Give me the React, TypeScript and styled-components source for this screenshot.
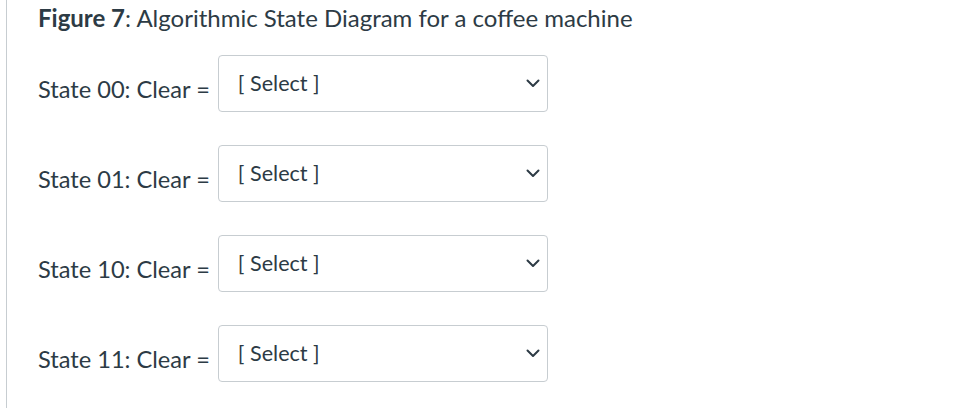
import React from "react";
import styled, { createGlobalStyle } from "styled-components";

const Global = createGlobalStyle`
  html, body { margin: 0; padding: 0; background: #fff; }
  body { font-family: Lato, "Open Sans", sans-serif; color: #2d3b45; }
`;

const Page = styled.div`
  width: 970px;
  height: 408px;
  box-sizing: border-box;
  padding-left: 6px;
`;

const Panel = styled.div`
  height: 408px;
  box-sizing: border-box;
  border-left: 1px solid #c7cdd1;
  padding: 3px 0 0 31px;
`;

const Title = styled.div`
  font-size: 24px;
  line-height: 30px;
  margin: 0 0 22px;
`;

const Rows = styled.div`
  display: flex;
  flex-direction: column;
  gap: 33px;
`;

const Row = styled.div`
  display: flex;
  align-items: center;
`;

const Label = styled.span`
  font-size: 23.6px;
  margin-right: 8px;
  position: relative;
  top: 5px;
`;

const SelectBox = styled.div`
  width: 330px;
  height: 57px;
  box-sizing: border-box;
  border: 1px solid #c7cdd1;
  border-radius: 4px;
  display: flex;
  align-items: center;
  justify-content: space-between;
  padding: 0 7px 1px 19px;
  font-size: 21.6px;
`;

const Chevron = () => (
  <svg width="14" height="9" viewBox="0 0 14 9">
    <path d="M1.5 1.5 L7 7 L12.5 1.5" fill="none" stroke="#2d3b45" strokeWidth="2" strokeLinecap="round" strokeLinejoin="round" />
  </svg>
);

const states = ["00", "01", "10", "11"];

export default function App() {
  return (
    <>
      <Global />
      <Page>
        <Panel>
          <Title>
            <strong>Figure 7</strong>: Algorithmic State Diagram for a coffee machine
          </Title>
          <Rows>
            {states.map((s) => (
              <Row key={s}>
                <Label>State {s}: Clear =</Label>
                <SelectBox>
                  <span>[ Select ]</span>
                  <Chevron />
                </SelectBox>
              </Row>
            ))}
          </Rows>
        </Panel>
      </Page>
    </>
  );
}
